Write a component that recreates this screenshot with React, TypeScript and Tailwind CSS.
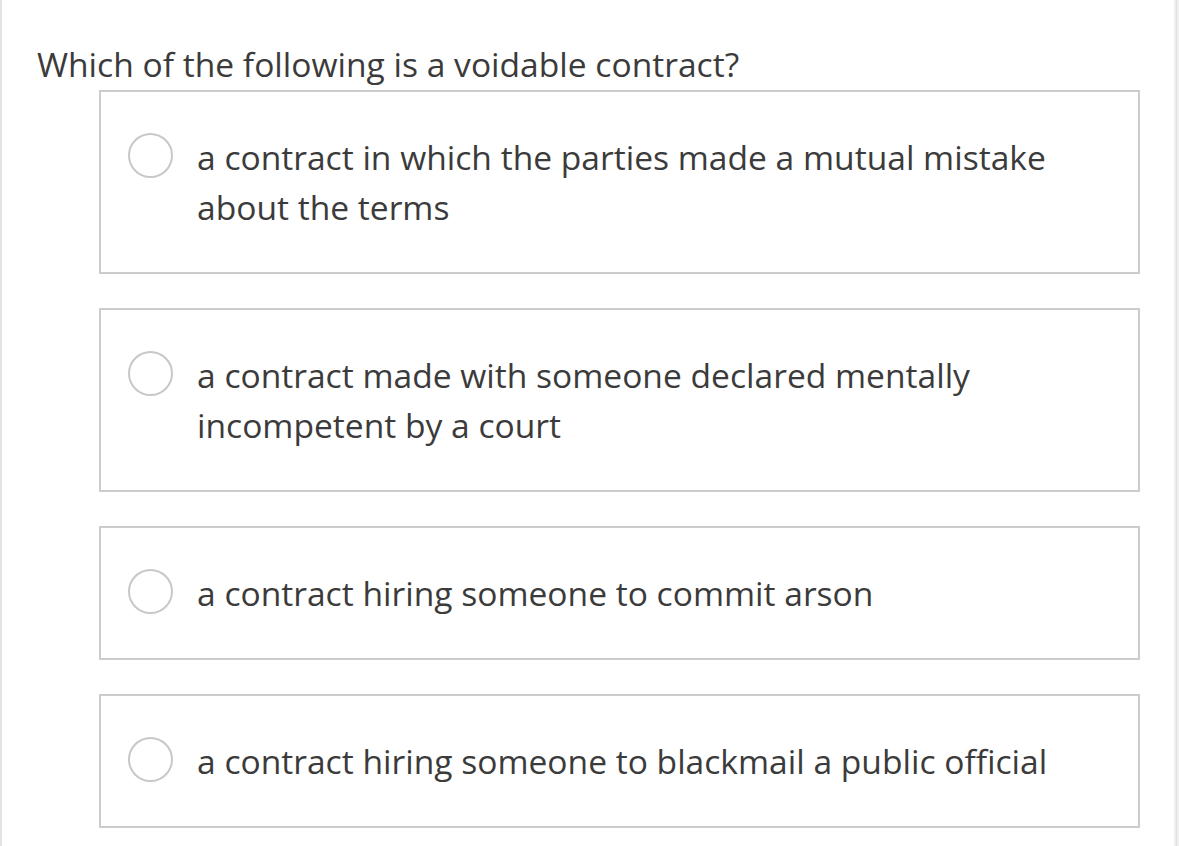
const options = [
  "a contract in which the parties made a mutual mistake about the terms",
  "a contract made with someone declared mentally incompetent by a court",
  "a contract hiring someone to commit arson",
  "a contract hiring someone to blackmail a public official",
];

function Option({ label }: { label: string }) {
  return (
    <label className="flex items-start border-2 border-[#cccccc] bg-white py-[40px] pl-[27px] pr-[60px]">
      <span className="mt-[1px] h-[45px] w-[45px] shrink-0 rounded-full border-2 border-[#c8c8c8]" />
      <span className="ml-[24px] text-[33.6px] leading-[50px] text-[#3b3b3b]">{label}</span>
    </label>
  );
}

export default function App() {
  return (
    <div
      className="flex h-[846px] w-full bg-white"
      style={{ fontFamily: '"Open Sans", sans-serif' }}
    >
      {/* left rule */}
      <div className="w-[2px] shrink-0 bg-[#e2e2e2]" />

      <main className="flex-1 pt-[41px]">
        <h1 className="pl-[35px] text-[33.6px] leading-[46px] text-[#3b3b3b]">
          Which of the following is a voidable contract?
        </h1>

        <div className="ml-[97px] mt-[3px] flex w-[1041px] flex-col gap-[34px]">
          {options.map((o) => (
            <Option key={o} label={o} />
          ))}
        </div>
      </main>

      {/* right rule */}
      <div className="flex w-[5px] shrink-0 bg-[#efefef]">
        <div className="ml-[2px] w-[1px] bg-[#e0e0e0]" />
      </div>
    </div>
  );
}
